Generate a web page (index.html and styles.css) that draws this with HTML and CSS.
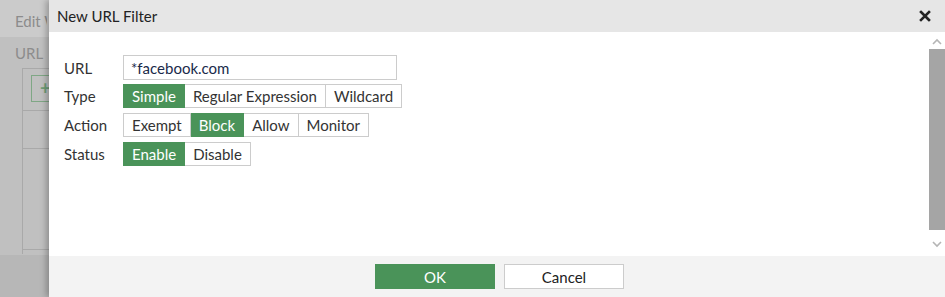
FILE: index.html
```html
<!DOCTYPE html>
<html>
<head>
    <meta charset="UTF-8">
    <title>New URL Filter</title>
    <link rel="stylesheet" href="styles.css">
</head>
<body>
    <div class="page">
        <div class="page-head"><span class="clip">Edit Web Filter Profile</span></div>
        <div class="page-body">
            <div class="page-label"><span class="clip">URL Filter</span></div>
            <div class="page-table">
                <div class="page-tools"><span class="add-btn">+</span></div>
                <div class="page-row"></div>
                <div class="page-row tall"></div>
            </div>
        </div>
        <div class="page-foot"></div>
    </div>

    <div class="dialog">
        <div class="dialog-head">
            <span class="dialog-title">New URL Filter</span>
            <svg class="close" width="12" height="12" viewBox="0 0 12 12">
                <path d="M2 2 L10 10 M10 2 L2 10" stroke="#222" stroke-width="2.6" stroke-linecap="square"/>
            </svg>
        </div>
        <div class="dialog-body">
            <div class="form">
                <div class="row">
                    <label>URL</label>
                    <input class="text" type="text" value="*facebook.com">
                </div>
                <div class="row">
                    <label>Type</label>
                    <div class="group">
                        <span class="opt on">Simple</span>
                        <span class="opt">Regular Expression</span>
                        <span class="opt">Wildcard</span>
                    </div>
                </div>
                <div class="row">
                    <label>Action</label>
                    <div class="group">
                        <span class="opt">Exempt</span>
                        <span class="opt on">Block</span>
                        <span class="opt">Allow</span>
                        <span class="opt">Monitor</span>
                    </div>
                </div>
                <div class="row">
                    <label>Status</label>
                    <div class="group">
                        <span class="opt on">Enable</span>
                        <span class="opt">Disable</span>
                    </div>
                </div>
            </div>
            <div class="scrollbar">
                <svg width="12" height="8" viewBox="0 0 12 8"><path d="M2 6 L6 2 L10 6" fill="none" stroke="#b5b5b5" stroke-width="1.6"/></svg>
                <div class="thumb"></div>
                <svg width="12" height="8" viewBox="0 0 12 8"><path d="M2 2 L6 6 L10 2" fill="none" stroke="#b5b5b5" stroke-width="1.6"/></svg>
            </div>
        </div>
        <div class="dialog-foot">
            <button class="btn ok">OK</button>
            <button class="btn">Cancel</button>
        </div>
    </div>
</body>
</html>
```

FILE: styles.css
```css
body {
    margin: 0;
    font-family: Lato, "Open Sans", sans-serif;
    font-size: 15px;
    color: #333;
    width: 945px;
    height: 297px;
    overflow: hidden;
    position: relative;
}
.page {
    height: 297px;
    display: flex;
    flex-direction: column;
    background: #c0c0c0;
}
.clip {
    display: block;
    width: 32px;
    overflow: hidden;
    white-space: nowrap;
}
.page-head {
    height: 37px;
    background: #cbcbcb;
    color: #8c8c8c;
    font-size: 15px;
    padding: 12px 0 0 15px;
    box-sizing: border-box;
}
.page-body {
    height: 218px;
    padding: 7px 0 0 15px;
    box-sizing: border-box;
}
.page-label {
    color: #8c8c8c;
    font-size: 15px;
}
.page-table {
    margin: 6px 0 0 7px;
    height: 185px;
    border-left: 1px solid #a9a9a9;
    border-top: 1px solid #a9a9a9;
}
.page-tools {
    height: 42px;
    padding: 6px 0 0 8px;
    box-sizing: border-box;
    border-bottom: 1px solid #a9a9a9;
}
.add-btn {
    display: inline-block;
    width: 20px;
    height: 27px;
    border: 1px solid #7fa785;
    box-sizing: border-box;
    color: #6f9e77;
    font-weight: bold;
    font-size: 18px;
    line-height: 24px;
    padding-left: 8px;
}
.page-row {
    height: 37px;
    border-bottom: 1px solid #a9a9a9;
}
.page-row.tall {
    height: 100px;
}
.page-foot {
    flex: 1;
    background: #b7b7b7;
}

.dialog {
    position: absolute;
    left: 49px;
    top: 0;
    width: 896px;
    height: 297px;
    display: flex;
    flex-direction: column;
    background: #fff;
    box-shadow: -3px 0 6px rgba(0, 0, 0, 0.25);
}
.dialog-head {
    height: 32px;
    background: #e6e6e6;
    display: flex;
    align-items: center;
    justify-content: space-between;
    padding: 0 14px 0 8px;
    flex-shrink: 0;
}
.dialog-title {
    font-size: 15px;
    color: #222;
}
.dialog-body {
    flex: 1;
    display: flex;
}
.form {
    flex: 1;
    padding: 23px 0 0 15px;
}
.row {
    display: flex;
    align-items: center;
    height: 24px;
    margin-bottom: 5px;
}
.row:first-child {
    height: 25px;
    margin-bottom: 4px;
}
.row label {
    width: 59px;
    color: #333;
}
.text {
    width: 274px;
    height: 25px;
    box-sizing: border-box;
    border: 1px solid #ccc;
    padding: 0 7px;
    font-family: inherit;
    font-size: 15px;
    color: #1a2a4a;
    outline: none;
}
.group {
    display: flex;
}
.opt {
    height: 24px;
    line-height: 22px;
    box-sizing: border-box;
    padding: 0 8px;
    border: 1px solid #ccc;
    border-left: none;
    color: #333;
    white-space: nowrap;
}
.opt:first-child {
    border-left: 1px solid #ccc;
}
.opt.on {
    background: #4a9359;
    border-color: #4a9359;
    color: #fff;
}
.scrollbar {
    width: 16px;
    display: flex;
    flex-direction: column;
    align-items: center;
}
.scrollbar svg {
    margin: 6px 0 3px;
}
.scrollbar svg:last-child {
    margin: 10px 0 0;
}
.thumb {
    width: 16px;
    height: 181px;
    background: #a5a5a5;
}
.dialog-foot {
    height: 41px;
    background: #f3f3f3;
    display: flex;
    justify-content: center;
    align-items: flex-start;
    gap: 9px;
    padding: 8px 0 0 5px;
    box-sizing: border-box;
    flex-shrink: 0;
}
.btn {
    width: 120px;
    height: 25px;
    border: 1px solid #ccc;
    background: #fff;
    font-family: inherit;
    font-size: 15px;
    color: #222;
    padding: 0;
}
.btn.ok {
    background: #4a9359;
    border-color: #4a9359;
    color: #fff;
}
```
